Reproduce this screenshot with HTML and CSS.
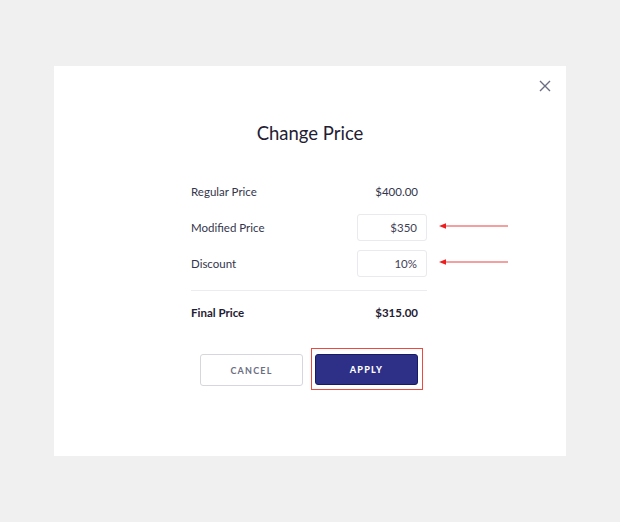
FILE: index.html
```html
<!DOCTYPE html>
<html>
<head>
<meta charset="utf-8">
<link rel="stylesheet" href="styles.css">
</head>
<body>
<div class="modal">
  <button class="close" aria-label="Close">
    <svg width="12" height="12" viewBox="0 0 12 12"><path d="M1 1L11 11M11 1L1 11" stroke="#6b6d86" stroke-width="1.4" fill="none"/></svg>
  </button>
  <h1 class="title">Change Price</h1>
  <div class="form">
    <div class="row">
      <span class="label">Regular Price</span>
      <span class="value">$400.00</span>
    </div>
    <div class="row">
      <span class="label">Modified Price</span>
      <span class="input">$350</span>
      <svg class="arrow" width="70" height="8" viewBox="0 0 70 8"><path d="M6 4H69" stroke="#f08080" stroke-width="1.6"/><path d="M0 4L7 1.2V6.8Z" fill="#ee1c1c"/></svg>
    </div>
    <div class="row">
      <span class="label">Discount</span>
      <span class="input">10%</span>
      <svg class="arrow" width="70" height="8" viewBox="0 0 70 8"><path d="M6 4H69" stroke="#f08080" stroke-width="1.6"/><path d="M0 4L7 1.2V6.8Z" fill="#ee1c1c"/></svg>
    </div>
    <div class="divider"></div>
    <div class="row total">
      <span class="label">Final Price</span>
      <span class="value">$315.00</span>
    </div>
  </div>
  <div class="actions">
    <button class="btn cancel">CANCEL</button>
    <button class="btn apply">APPLY</button>
  </div>
</div>
</body>
</html>
```
FILE: styles.css
```css
html, body {
  margin: 0;
  padding: 0;
}
body {
  background: #f0f0f0;
  font-family: Lato, "Open Sans", sans-serif;
  color: #33354b;
  padding: 66px 54px 0;
  height: 522px;
  box-sizing: border-box;
}
.modal {
  position: relative;
  background: #fff;
  width: 512px;
  height: 390px;
  box-sizing: border-box;
  padding-top: 56px;
  display: flex;
  flex-direction: column;
  align-items: center;
}
.close {
  position: absolute;
  top: 14px;
  right: 15px;
  border: 0;
  background: none;
  padding: 0;
  width: 12px;
  height: 12px;
  display: flex;
}
.title {
  margin: 0;
  font-size: 18.5px;
  font-weight: 400;
  color: #1f2033;
  line-height: 22px;
}
.form {
  width: 236px;
  margin-top: 34px;
  margin-left: -2px;
  display: flex;
  flex-direction: column;
  gap: 10px;
}
.row {
  position: relative;
  height: 26px;
  display: flex;
  align-items: center;
  justify-content: space-between;
  font-size: 11.5px;
}
.label {
  color: #33354b;
}
.value {
  padding-right: 9px;
  font-size: 11.5px;
}
.input {
  width: 70px;
  height: 27px;
  box-sizing: border-box;
  border: 1px solid #e9e9ee;
  border-radius: 3px;
  display: flex;
  align-items: center;
  justify-content: flex-end;
  padding-right: 9px;
  font-size: 11.5px;
  color: #3f4155;
}
.arrow {
  position: absolute;
  left: calc(100% + 12px);
  top: 8px;
}
.divider {
  height: 1px;
  background: #ececf0;
  margin-top: 4px;
  margin-bottom: -2px;
}
.total {
  font-weight: 700;
  color: #1f2033;
}
.total .label {
  color: #1f2033;
}
.actions {
  margin-top: 29px;
  margin-left: -2px;
  display: flex;
  gap: 12px;
}
.btn {
  width: 103px;
  height: 32px;
  border-radius: 3px;
  font-family: Lato, "Open Sans", sans-serif;
  font-size: 9px;
  letter-spacing: 1.2px;
  cursor: pointer;
}
.cancel {
  background: #fff;
  border: 1px solid #d6d6dc;
  color: #6c6e82;
  font-weight: 700;
}
.apply {
  position: relative;
  background: #2e3088;
  border: 1px solid #191a66;
  color: #fff;
  font-weight: 900;
  height: 31px;
}
.apply::after {
  content: "";
  position: absolute;
  top: -7px;
  left: -5px;
  right: -6px;
  bottom: -6px;
  border: 1px solid #ec4a3e;
  pointer-events: none;
}
```
